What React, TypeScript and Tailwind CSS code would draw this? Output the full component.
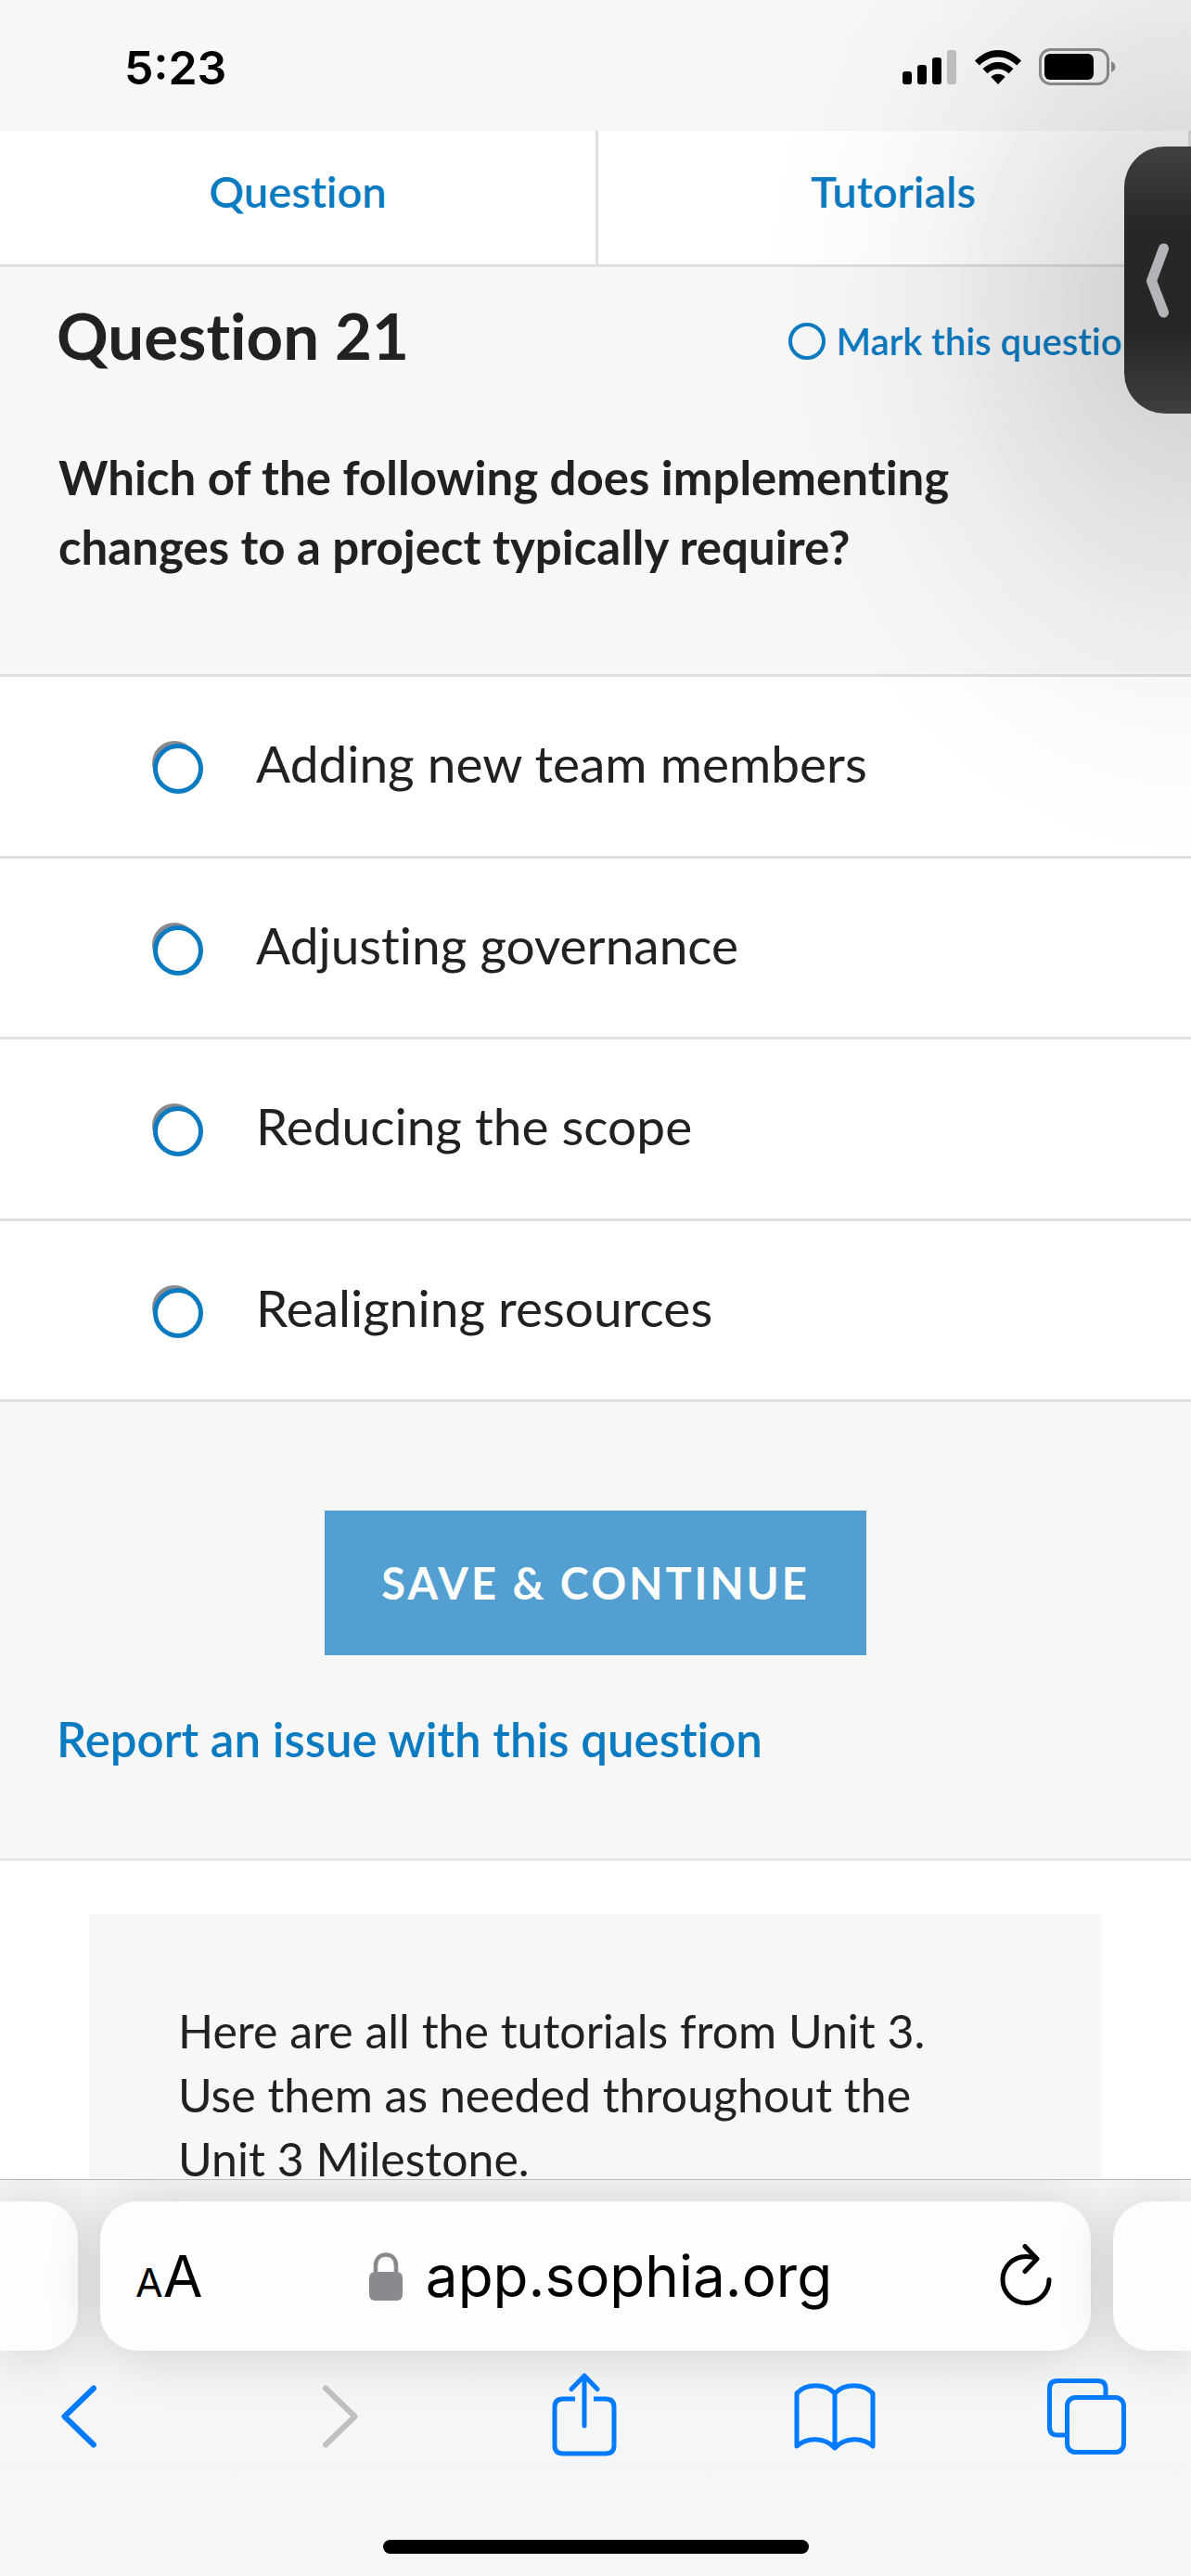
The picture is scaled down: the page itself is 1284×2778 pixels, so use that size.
import React from "react";

const answers = [
  "Adding new team members",
  "Adjusting governance",
  "Reducing the scope",
  "Realigning resources",
];

function StatusBar() {
  return (
    <header className="flex h-[141px] shrink-0 items-start justify-between bg-gradient-to-b from-[#f8f6f9] to-[#f7f7f7] to-40% pt-[42px] pr-[80px] pl-[134px] font-['Inter',sans-serif]">
      <time className="text-[50px] leading-[62px] font-semibold text-black">5:23</time>
      <div className="mt-[10px] flex items-center gap-[18px]">
        <svg width="60" height="40" viewBox="0 0 60 40" aria-label="Signal strength">
          <rect x="1" y="25" width="10" height="14" rx="3" />
          <rect x="17" y="18" width="10" height="21" rx="3" />
          <rect x="33" y="10" width="10" height="29" rx="3" />
          <rect x="49" y="2" width="10" height="37" rx="3" fill="#c1c1c1" />
        </svg>
        <svg width="52" height="40" viewBox="0 0 52 40" aria-label="Wi-Fi">
          <path d="M1 13.5C8 6.300 16.500 2 26 2s18 4.300 25 11.500l-4.800 5C40.500 13 33.500 9.600 26 9.600S11.500 13 5.800 18.500z" />
          <path d="M9.600 22.200C14.300 17.700 19.800 15 26 15s11.700 2.700 16.400 7.200l-4.800 5C34.300 24.200 30.400 22.400 26 22.400s-8.300 1.800-11.600 4.800z" />
          <path d="M18.400 31c2.100-2.100 4.700-3.200 7.600-3.200s5.500 1.100 7.600 3.200L26 39z" />
        </svg>
        <svg width="84" height="40" viewBox="0 0 84 40" aria-label="Battery">
          <rect x="1.500" y="1.500" width="73" height="37" rx="11" fill="none" stroke="#8f8f90" strokeWidth="3" />
          <rect x="6" y="6" width="53" height="28" rx="6" />
          <path d="M78 14c3 1 4.500 3.500 4.500 6s-1.500 5-4.500 6z" fill="#8f8f90" />
        </svg>
      </div>
    </header>
  );
}

function FloatingPanel() {
  return (
    <>
      <div className="pointer-events-none absolute -top-[300px] right-0 h-[1260px] w-[480px] bg-[radial-gradient(ellipse_470px_610px_at_100%_50%,rgba(0,0,0,0.17)_0%,rgba(0,0,0,0.13)_20%,rgba(0,0,0,0.08)_42%,rgba(0,0,0,0.036)_62%,rgba(0,0,0,0.01)_82%,rgba(0,0,0,0)_100%)]" />
      <button
        type="button"
        aria-label="Show video"
        className="absolute top-[158px] right-0 flex h-[288px] w-[72px] items-center justify-center rounded-l-[44px] bg-[linear-gradient(#404040,#272727_30%,#272727_70%,#3e3e3e)]"
      >
        <svg width="28" height="84" viewBox="0 0 28 84" fill="none" stroke="#b4b3ba" strokeWidth="11" strokeLinecap="round" strokeLinejoin="round">
          <path d="M20.500 8 7.500 43l13 34" />
        </svg>
      </button>
    </>
  );
}

function BrowserBar() {
  const card = "h-[161px] bg-[#fdfdfd] shadow-[0_4px_60px_rgba(0,0,0,0.16)]";
  const tool = "flex w-[90px] items-center justify-center";
  return (
    <footer className="relative shrink-0 overflow-hidden border-t border-[#b9b9b9] bg-[linear-gradient(#f5f5f5,#f5f6f6_60%,#f4f6f8)] font-['Inter',sans-serif]">
      <div className="flex gap-6 pt-[23px]">
        <div className={`${card} w-[84px] rounded-r-[40px]`} />
        <div className={`${card} flex min-w-0 flex-1 items-center justify-between rounded-[40px] pr-[40px] pl-[38px]`}>
          <button type="button" aria-label="Page settings" className="flex w-[74px] items-baseline leading-none text-black">
            <span className="text-[43px]">A</span>
            <span className="text-[62px]">A</span>
          </button>
          <a href="#address" className="flex items-center gap-6 pr-1 text-[62px] leading-[76px] text-black">
            <svg width="38" height="54" viewBox="0 0 38 54" aria-hidden="true">
              <path d="M8 26V15.500C8 8 12.500 3.500 19 3.500S30 8 30 15.500V26" fill="none" stroke="#8a898e" strokeWidth="4.500" />
              <rect x="1" y="22" width="36" height="31" rx="6" fill="#8a898e" />
            </svg>
            app.sophia.org
          </a>
          <button type="button" aria-label="Reload">
            <svg width="58" height="70" viewBox="0 0 58 70" fill="none" stroke="#000" strokeWidth="5" strokeLinecap="round" strokeLinejoin="round">
              <path d="M53 38.500A25 25 0 1 1 28 13.500c4 0 8 .8 11 2.500" />
              <path d="M27 2.500 40 16 27 29.500" />
            </svg>
          </button>
        </div>
        <div className={`${card} w-[84px] rounded-l-[40px]`} />
      </div>
      <nav className="relative flex h-[112px] items-center justify-between pt-[30px] pr-[68px] pl-[40px] text-[#007aff]" aria-label="Browser">
        <button type="button" aria-label="Back" className={tool}>
          <svg width="42" height="72" viewBox="0 0 42 72" fill="none" stroke="currentColor" strokeWidth="6" strokeLinecap="round" strokeLinejoin="round">
            <path d="M37 5.500 5.500 36 37 66.500" />
          </svg>
        </button>
        <button type="button" aria-label="Forward" disabled className={`${tool} pl-5 text-[#bfbfbf]`}>
          <svg width="42" height="72" viewBox="0 0 42 72" fill="none" stroke="currentColor" strokeWidth="6" strokeLinecap="round" strokeLinejoin="round">
            <path d="M5 5.500 36.500 36 5 66.500" />
          </svg>
        </button>
        <button type="button" aria-label="Share" className={`${tool} pl-1`}>
          <svg width="72" height="94" viewBox="0 0 72 94" fill="none" stroke="currentColor" strokeWidth="5" strokeLinecap="round" strokeLinejoin="round">
            <path d="M36 4v53M22 17.500 36 3l14 14.500" />
            <path d="M26 28H13q-9 0-9 9v41q0 9 9 9h46q9 0 9-9V37q0-9-9-9H46" strokeLinecap="butt" />
          </svg>
        </button>
        <button type="button" aria-label="Bookmarks" className={tool}>
          <svg width="90" height="76" viewBox="0 0 90 76" fill="none" stroke="currentColor" strokeWidth="5" strokeLinecap="round" strokeLinejoin="round">
            <path d="M45 13C35 2 14 2 4 13v57c11-10 30-10 41 2 11-12 30-12 41-2V13C76 2 55 2 45 13zM45 13v59" />
          </svg>
        </button>
        <button type="button" aria-label="Tabs" className={tool}>
          <svg width="86" height="84" viewBox="0 0 86 84" fill="none" stroke="currentColor" strokeWidth="5">
            <rect x="22.500" y="21.500" width="61" height="59" rx="9" />
            <path d="M22.500 62H12q-8.500 0-8.500-8.500V12Q3.500 3.500 12 3.500h43.500Q64 3.500 64 12v9.500" />
          </svg>
        </button>
      </nav>
      <div className="flex justify-center pt-[92px] pb-6">
        <div className="h-[15px] w-[459px] rounded-full bg-black" />
      </div>
    </footer>
  );
}

export default function App() {
  return (
    <div className="relative flex h-screen flex-col overflow-hidden bg-white font-['Lato',sans-serif] text-[#212121] [font-variant-ligatures:no-common-ligatures]">
      <StatusBar />
      <main className="min-h-0 flex-1 overflow-hidden">
        <nav className="grid h-[147px] grid-cols-2 border-b-3 border-[#e0e0e0] bg-white text-[47px] leading-[54px] font-semibold text-[#0b7bc1]" aria-label="Sections">
          <a href="#question" className="pt-[38px] text-center">Question</a>
          <a href="#tutorials" className="border-x-3 border-[#e0e0e0] pt-[38px] text-center">Tutorials</a>
        </nav>

        <form id="question">
          <div className="h-[439px] bg-[#f7f7f7] pl-[61px]">
            <div className="flex items-center justify-between pt-[30px] pr-[52px]">
              <h1 className="text-[69px] leading-[88px] font-bold">Question 21</h1>
              <button type="button" className="flex items-center gap-3 pt-3 text-[40px] leading-[46px] font-semibold whitespace-nowrap text-[#0b7bc1]">
                <span className="size-10 rounded-full border-4 border-[#0b7bc1]" />
                Mark this question
              </button>
            </div>
            <p className="max-w-[1040px] pt-[71px] pl-[2px] text-[51px] leading-[75px] font-bold">
              Which of the following does implementing changes to a project typically require?
            </p>
          </div>

          <div role="radiogroup" aria-label="Answers" className="grid h-[782px] grid-rows-4 bg-white">
            {answers.map((answer) => (
              <label key={answer} className="flex items-center border-t-3 border-[#dfdfe2] pb-[6px] pl-[164px] text-[55px] leading-[64px]">
                <input
                  type="radio"
                  name="answer"
                  value={answer}
                  className="relative size-[48px] appearance-none rounded-full bg-[#8a8a8e] before:absolute before:top-[3px] before:left-px before:size-[54px] before:rounded-full before:border-5 before:border-[#0b7bc1] before:bg-white"
                />
                <span className="pl-[64px]">{answer}</span>
              </label>
            ))}
          </div>

          <div className="border-y-3 border-t-[#dfdfe2] border-b-[#e6e6e6] bg-[#f7f7f7] pt-[117px] pb-[96px]">
            <button type="submit" className="mx-auto block h-[156px] w-[584px] bg-[#549fd1] text-[47px] font-bold tracking-[3px] text-white">
              SAVE &amp; CONTINUE
            </button>
            <a href="#report" className="mt-[59px] ml-[61px] block text-[51px] leading-[64px] font-semibold text-[#0b7bc1]">
              Report an issue with this question
            </a>
          </div>
        </form>

        <section id="tutorials" className="bg-white px-24 pt-[57px]">
          <p className="bg-[#f7f7f7] pt-[92px] pr-36 pb-24 pl-24 text-[50px] leading-[69px]">
            Here are all the tutorials from Unit 3. Use them as needed throughout the Unit 3 Milestone.
          </p>
        </section>
      </main>
      <BrowserBar />
      <FloatingPanel />
    </div>
  );
}
